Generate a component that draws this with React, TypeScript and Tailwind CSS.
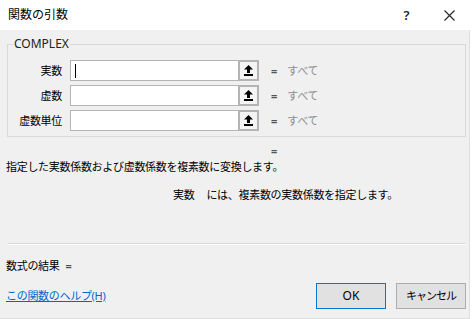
import React from 'react';

const font = { fontFamily: '"Noto Sans", "Noto Sans CJK JP", sans-serif' };

// Collapse (reference) button next to each argument box
const RefButton = () => (
  <div className="w-[21px] h-[21px] border-2 border-[#b4b4b4] bg-[#f4f4f4] flex items-center justify-center">
    <svg width="9" height="11" viewBox="0 0 9 11">
      <path d="M4.5 0L9 4.5H6V8H3V4.5H0Z" fill="#000" />
      <rect x="0" y="9" width="9" height="2" fill="#000" />
    </svg>
  </div>
);

const ArgRow = ({ label, caret }: { label: string; caret?: boolean }) => (
  <div className="flex items-center h-[21px]">
    <div className="w-[54px] text-right tracking-[-0.3px]">{label}</div>
    <div className="ml-[8px] w-[168px] h-[21px] bg-white border border-[#b4b4b4] border-r-0 flex items-center pl-[4px]">
      {caret && <span className="w-px h-[14px] bg-black" />}
    </div>
    <RefButton />
    <span className="ml-[12px] text-[#555] font-bold">=</span>
    <span className="ml-[10px] text-[#8d8d8d] tracking-[-0.3px]">すべて</span>
  </div>
);

const App = () => {
  return (
    <div className="w-[474px] h-[319px] bg-white flex flex-col text-[11px] leading-[14px] text-black overflow-hidden" style={font}>
      {/* Title bar */}
      <div className="h-[30px] flex items-center pl-[8px] shrink-0">
        <span className="text-[12px]">関数の引数</span>
        <div className="flex-1" />
        <span className="w-[43px] text-center text-[13px] font-semibold text-[#222]">?</span>
        <span className="w-[43px] flex justify-center mr-[3px]">
          <svg width="11" height="11" viewBox="0 0 11 11">
            <path d="M0.5 0.5L10.5 10.5M10.5 0.5L0.5 10.5" stroke="#222" strokeWidth="1.1" />
          </svg>
        </span>
      </div>

      {/* Body */}
      <div className="w-[470px] flex-1 bg-[#f0f0f0] border-r border-b border-[#dedede] flex flex-col">
        <fieldset className="ml-[7px] mt-[7px] w-[459px] border border-[#d9d9d9] px-0 pt-[9px] pb-[5px]">
          <legend className="ml-[5px] px-px text-[12px] text-[#222]">COMPLEX</legend>
          <div className="flex flex-col gap-[4px]">
            <ArgRow label="実数" caret />
            <ArgRow label="虚数" />
            <ArgRow label="虚数単位" />
          </div>
        </fieldset>

        <div className="mt-[7px] pl-[271px] text-[#555] font-bold">=</div>
        <div className="mt-[2px] pl-[6px] tracking-[-0.3px]">指定した実数係数および虚数係数を複素数に変換します。</div>
        <div className="mt-[14px] pl-[173px] flex tracking-[-0.3px]">
          <span>実数</span>
          <span className="ml-[12px]">には、複素数の実数係数を指定します。</span>
        </div>

        <div className="mt-[41px] ml-[8px] w-[458px] border-t border-[#d9d9d9] border-b border-b-white" />

        <div className="mt-[14px] pl-[6px] flex tracking-[-0.3px]">
          <span>数式の結果</span>
          <span className="ml-[6px] text-[#555] font-bold">=</span>
        </div>

        <div className="mt-[10px] flex items-center pl-[6px]">
          <a className="text-[#0066cc] underline tracking-[-0.3px]">この関数のヘルプ(H)</a>
          <div className="flex-1" />
          <button className="w-[70px] h-[26px] bg-[#e1e1e1] border border-[#0078d7] text-[12px]">OK</button>
          <button className="ml-[10px] mr-[3px] w-[70px] h-[26px] bg-[#e1e1e1] border border-[#adadad] tracking-[-1px]">キャンセル</button>
        </div>
      </div>
    </div>
  );
};

export default App;
